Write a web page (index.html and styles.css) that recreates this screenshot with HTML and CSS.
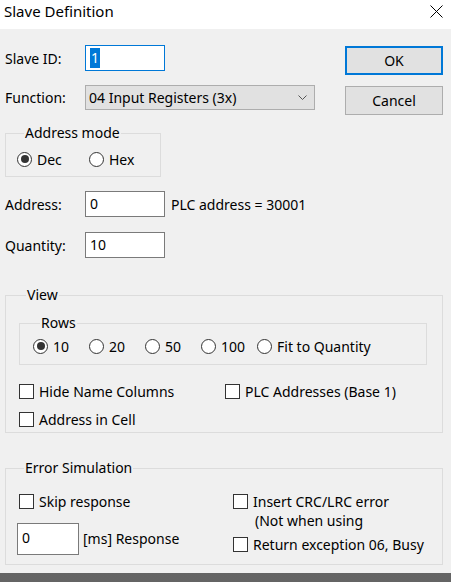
FILE: index.html
```html
<!DOCTYPE html>
<html>
<head>
<meta charset="utf-8">
<title>Slave Definition</title>
<link rel="stylesheet" href="styles.css">
</head>
<body>
<div class="window">
  <div class="titlebar">
    <span class="title">Slave Definition</span>
    <svg class="close" width="13" height="13" viewBox="0 0 13 13"><path d="M0.5 0.5 L12.5 12.5 M12.5 0.5 L0.5 12.5" stroke="#000" stroke-width="1" fill="none"/></svg>
  </div>
  <div class="content">
    <div class="top">
      <div class="topleft">
        <div class="row">
          <span class="label">Slave ID:</span>
          <div class="textbox focus"><span class="sel">1</span></div>
        </div>
        <div class="row row-func">
          <span class="label">Function:</span>
          <div class="select">
            <span>04 Input Registers (3x)</span>
            <svg class="chev" width="9" height="5" viewBox="0 0 9 5"><path d="M0.5 0.5 L4.5 4.5 L8.5 0.5" stroke="#555" stroke-width="1" fill="none"/></svg>
          </div>
        </div>
      </div>
      <div class="buttons">
        <div class="btn default">OK</div>
        <div class="btn">Cancel</div>
      </div>
    </div>

    <fieldset class="group addrmode">
      <legend>Address mode</legend>
      <div class="radios">
        <span class="radio-item w72"><span class="radio on"></span>Dec</span>
        <span class="radio-item"><span class="radio"></span>Hex</span>
      </div>
    </fieldset>

    <div class="row row-addr">
      <span class="label">Address:</span>
      <div class="textbox">0</div>
      <span class="plc">PLC address = 30001</span>
    </div>
    <div class="row row-qty">
      <span class="label">Quantity:</span>
      <div class="textbox">10</div>
    </div>

    <fieldset class="group view">
      <legend>View</legend>
      <fieldset class="group rows">
        <legend>Rows</legend>
        <div class="radios">
          <span class="radio-item w56"><span class="radio on"></span>10</span>
          <span class="radio-item w56"><span class="radio"></span>20</span>
          <span class="radio-item w56"><span class="radio"></span>50</span>
          <span class="radio-item w56"><span class="radio"></span>100</span>
          <span class="radio-item"><span class="radio"></span>Fit to Quantity</span>
        </div>
      </fieldset>
      <div class="checkrow first">
        <span class="check-item w206"><span class="check"></span>Hide Name Columns</span>
        <span class="check-item"><span class="check"></span>PLC Addresses (Base 1)</span>
      </div>
      <div class="checkrow second">
        <span class="check-item"><span class="check"></span>Address in Cell</span>
      </div>
    </fieldset>

    <fieldset class="group error">
      <legend>Error Simulation</legend>
      <div class="errcols">
        <div class="errleft">
          <div class="checkrow"><span class="check-item"><span class="check"></span>Skip response</span></div>
          <div class="resprow">
            <div class="textbox tall">0</div>
            <span class="ms">[ms] Response</span>
          </div>
        </div>
        <div class="errright">
          <div class="checkrow"><span class="check-item"><span class="check"></span>Insert CRC/LRC error</span></div>
          <div class="note">(Not when using</div>
          <div class="checkrow"><span class="check-item"><span class="check"></span>Return exception 06, Busy</span></div>
        </div>
      </div>
    </fieldset>
  </div>
</div>
</body>
</html>
```

FILE: styles.css
```css
html {
  background: linear-gradient(#7a7a7a, #646464);
  height: 100%;
}
body {
  margin: 0;
  font-family: "Noto Sans", "Open Sans", sans-serif;
  font-size: 14px;
  color: #000;
}
.window {
  width: 451px;
  height: 573px;
  display: flex;
  flex-direction: column;
}
.titlebar {
  height: 29px;
  background: #fff;
  display: flex;
  align-items: center;
  justify-content: space-between;
  padding: 0 8px 0 4px;
  box-sizing: border-box;
}
.title {
  font-size: 15px;
  line-height: 20px;
  margin-top: -7px;
}
.close {
  margin-top: -7px;
}
.content {
  flex: 1;
  background: #f0f0f0;
  padding: 16px 8px 0 5px;
  box-sizing: border-box;
}
.top {
  display: flex;
  align-items: flex-start;
  justify-content: space-between;
}
.row {
  display: flex;
  align-items: center;
  height: 26px;
}
.label {
  width: 80px;
  flex: none;
}
.row-func {
  margin-top: 14px;
  height: 25px;
}
.textbox {
  width: 80px;
  height: 26px;
  box-sizing: border-box;
  border: 1px solid #7a7a7a;
  background: #fff;
  padding: 0 4px;
  line-height: 24px;
}
.textbox.focus {
  border-color: #0078d7;
  padding-top: 2px;
  line-height: 20px;
}
.sel {
  display: inline-block;
  background: #0078d7;
  color: #fff;
  padding: 0 1px;
  height: 20px;
  line-height: 20px;
}
.select {
  width: 230px;
  height: 25px;
  box-sizing: border-box;
  border: 1px solid #adadad;
  background: #e1e1e1;
  display: flex;
  align-items: center;
  justify-content: space-between;
  padding: 0 7px 0 3px;
}
.buttons {
  display: flex;
  flex-direction: column;
  gap: 11px;
  margin-top: 1px;
}
.btn {
  width: 98px;
  height: 29px;
  box-sizing: border-box;
  border: 1px solid #adadad;
  background: #e1e1e1;
  display: flex;
  align-items: center;
  justify-content: center;
}
.btn.default {
  border: 2px solid #0078d7;
}
.group {
  margin: 0;
  padding: 0;
  border: 1px solid #dcdcdc;
  min-width: 0;
}
.group legend {
  padding: 0 1px;
  margin-left: 7px;
  line-height: 16px;
}
.addrmode {
  width: 156px;
  box-sizing: border-box;
  margin-top: 10px;
  padding: 9px 0 8px 11px;
}
.radios {
  display: flex;
  align-items: center;
  height: 18px;
}
.radio-item {
  display: inline-flex;
  align-items: center;
  gap: 5px;
  flex: none;
}
.w72 { width: 72px; }
.w56 { width: 56px; }
.radio {
  width: 15px;
  height: 15px;
  box-sizing: border-box;
  border: 1px solid #333;
  border-radius: 50%;
  background: #fff;
  display: inline-flex;
  align-items: center;
  justify-content: center;
}
.radio.on::after {
  content: "";
  width: 8px;
  height: 8px;
  border-radius: 50%;
  background: #333;
}
.row-addr {
  margin-top: 14px;
}
.plc {
  margin-left: 6px;
}
.row-qty {
  margin-top: 15px;
}
.view {
  margin-top: 29px;
  padding: 0 15px 4px 13px;
}
.rows {
  margin-top: 12px;
  padding: 6px 0 9px 13px;
}
.rows legend {
  margin-left: 7px;
}
.checkrow {
  display: flex;
  align-items: center;
  height: 18px;
}
.view .checkrow.first {
  margin-top: 17px;
}
.view .checkrow.second {
  margin-top: 10px;
}
.check-item {
  display: inline-flex;
  align-items: center;
  gap: 5px;
  flex: none;
}
.w206 { width: 206px; }
.check {
  width: 15px;
  height: 15px;
  box-sizing: border-box;
  border: 1px solid #333;
  background: #fff;
}
.error {
  margin-top: 27px;
  padding: 16px 0 9px 11px;
}
.errcols {
  display: flex;
}
.errleft {
  width: 216px;
  flex: none;
}
.errleft .checkrow {
  padding-left: 2px;
}
.resprow {
  display: flex;
  align-items: center;
  margin-top: 13px;
}
.textbox.tall {
  width: 62px;
  height: 32px;
  line-height: 20px;
  padding-top: 4px;
}
.ms {
  margin-left: 4px;
  margin-top: -2px;
}
.note {
  padding-left: 22px;
  line-height: 22px;
  margin-top: 0;
}
.errright .checkrow:last-child {
  margin-top: 3px;
}
```
